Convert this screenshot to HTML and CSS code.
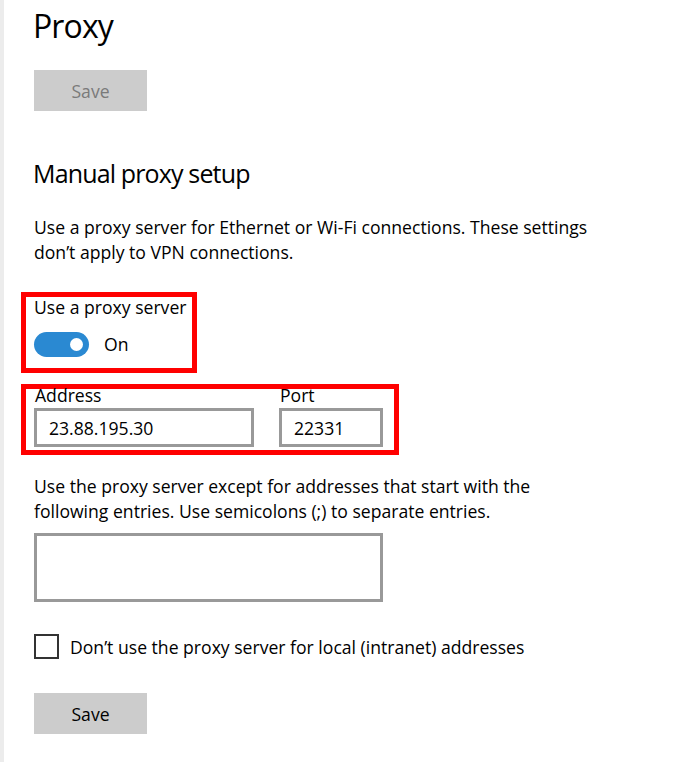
FILE: index.html
```html
<!DOCTYPE html>
<html lang="en">
<head>
<meta charset="utf-8">
<title>Proxy</title>
<link rel="stylesheet" href="styles.css">
</head>
<body>
<div class="page">
  <main class="content">
    <h1 class="title">Proxy</h1>
    <button class="btn btn-disabled btn-top" type="button">Save</button>
    <h2 class="subtitle">Manual proxy setup</h2>
    <p class="desc desc-first">Use a proxy server for Ethernet or Wi-Fi connections. These settings don’t apply to VPN connections.</p>
    <div class="highlight toggle-group">
      <div class="group-label">Use a proxy server</div>
      <div class="toggle-row">
        <span class="toggle"><span class="knob"></span></span>
        <span class="toggle-state">On</span>
      </div>
    </div>
    <div class="highlight fields">
      <div class="field">
        <div class="field-label">Address</div>
        <div class="input input-address">23.88.195.30</div>
      </div>
      <div class="field">
        <div class="field-label">Port</div>
        <div class="input input-port">22331</div>
      </div>
    </div>
    <p class="desc desc-second">Use the proxy server except for addresses that start with the following entries. Use semicolons (;) to separate entries.</p>
    <div class="textarea"></div>
    <div class="check-row">
      <span class="checkbox"></span>
      <span class="check-label">Don’t use the proxy server for local (intranet) addresses</span>
    </div>
    <button class="btn btn-bottom" type="button">Save</button>
  </main>
</div>
</body>
</html>
```

FILE: styles.css
```css
html, body {
  margin: 0;
  padding: 0;
  background: #ffffff;
}

body {
  font-family: "Open Sans", "Noto Sans", sans-serif;
  color: #000000;
}

.page {
  min-height: 762px;
  border-left: 4px solid #ececec;
  box-sizing: border-box;
}

.content {
  padding-left: 30px;
  padding-top: 6px;
  display: flex;
  flex-direction: column;
  align-items: flex-start;
}

.title {
  margin: 0 0 0 -1px;
  font-size: 32px;
  font-weight: 400;
  line-height: 40px;
  letter-spacing: -0.9px;
}

.btn {
  width: 113px;
  height: 41px;
  border: 0;
  padding: 0;
  background: #cccccc;
  font-family: inherit;
  font-size: 17.6px;
  color: #000000;
}

.btn-disabled {
  color: #7a7a7a;
}

.btn-top {
  margin-top: 24px;
}

.subtitle {
  margin: 46px 0 0 -1px;
  font-size: 25px;
  font-weight: 400;
  line-height: 32px;
  letter-spacing: -0.85px;
}

.desc {
  margin: 0;
  width: 562px;
  font-size: 17.6px;
  line-height: 25px;
}

.desc-first {
  margin-top: 26px;
}

.highlight {
  border: 5px solid #ff0000;
  box-sizing: border-box;
  margin-left: -13px;
  padding-left: 8px;
}

.toggle-group {
  margin-top: 27px;
  width: 176px;
  padding-bottom: 11px;
}

.group-label {
  font-size: 17.6px;
  line-height: 20px;
  white-space: nowrap;
}

.toggle-row {
  margin-top: 15px;
  display: flex;
  align-items: center;
  gap: 15px;
}

.toggle {
  position: relative;
  width: 55px;
  height: 25px;
  border-radius: 13px;
  background: #2a89d2;
  flex: none;
}

.knob {
  position: absolute;
  right: 6px;
  top: 6px;
  width: 13px;
  height: 13px;
  border-radius: 50%;
  background: #ffffff;
}

.toggle-state {
  font-size: 17.6px;
  line-height: 25px;
}

.fields {
  margin-top: 11px;
  width: 378px;
  padding-bottom: 3px;
  display: flex;
  gap: 25px;
}

.field-label {
  font-size: 17.6px;
  line-height: 13px;
  padding-left: 1px;
}

.input {
  margin-top: 6px;
  height: 39px;
  box-sizing: border-box;
  border: 3px solid #999999;
  padding: 1px 0 0 12px;
  font-size: 17.6px;
  line-height: 33px;
}

.input-address {
  width: 220px;
}

.input-port {
  width: 104px;
}

.desc-second {
  margin-top: 19px;
}

.textarea {
  margin-top: 9px;
  width: 349px;
  height: 69px;
  box-sizing: border-box;
  border: 3px solid #999999;
}

.check-row {
  margin-top: 32px;
  display: flex;
  align-items: center;
  gap: 11px;
}

.checkbox {
  width: 25px;
  height: 25px;
  box-sizing: border-box;
  border: 2px solid #333333;
  flex: none;
}

.check-label {
  font-size: 17.6px;
  line-height: 24px;
}

.btn-bottom {
  margin-top: 34px;
}
```
